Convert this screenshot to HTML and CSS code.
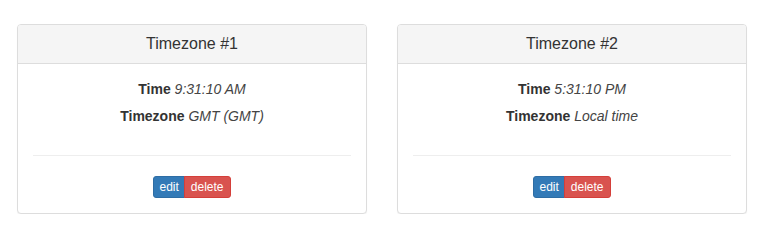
FILE: index.html
```html
<!DOCTYPE html>
<html>
<head>
<meta charset="utf-8">
<link rel="stylesheet" href="styles.css">
</head>
<body>
<div class="row">
  <div class="panel">
    <div class="panel-heading"><h3 class="panel-title">Timezone #1</h3></div>
    <div class="panel-body">
      <p class="line"><strong>Time</strong> <em>9:31:10 AM</em></p>
      <p class="line last"><strong>Timezone</strong> <em>GMT (GMT)</em></p>
      <hr class="sep">
      <div class="actions">
        <div class="btn-group">
          <button class="btn btn-primary">edit</button><button class="btn btn-danger">delete</button>
        </div>
      </div>
    </div>
  </div>
  <div class="panel">
    <div class="panel-heading"><h3 class="panel-title">Timezone #2</h3></div>
    <div class="panel-body">
      <p class="line"><strong>Time</strong> <em>5:31:10 PM</em></p>
      <p class="line last"><strong>Timezone</strong> <em>Local time</em></p>
      <hr class="sep">
      <div class="actions">
        <div class="btn-group">
          <button class="btn btn-primary">edit</button><button class="btn btn-danger">delete</button>
        </div>
      </div>
    </div>
  </div>
</div>
</body>
</html>
```
FILE: styles.css
```css
html, body {
  margin: 0;
  padding: 0;
  background: #fff;
}
body {
  font-family: "Liberation Sans", Arial, Helvetica, sans-serif;
  font-size: 14px;
  line-height: 20px;
  color: #333;
}
.row {
  display: flex;
  gap: 30px;
  padding: 24px 0 0 17px;
}
.panel {
  width: 350px;
  box-sizing: border-box;
  border: 1px solid #ddd;
  border-radius: 4px;
  background: #fff;
  box-shadow: 0 1px 1px rgba(0,0,0,.05);
}
.panel-heading {
  background: #f5f5f5;
  border-bottom: 1px solid #ddd;
  border-radius: 3px 3px 0 0;
  padding: 10px 15px;
  text-align: center;
}
.panel-title {
  margin: 0;
  font-size: 16px;
  font-weight: normal;
  line-height: 17.6px;
  color: #333;
}
.panel-body {
  padding: 15px;
  text-align: center;
}
.line {
  margin: 0 0 7px;
}
.line.last {
  margin-bottom: 0;
}
.line em {
  color: #444;
}
.sep {
  margin: 29px 0 20px;
  border: 0;
  border-top: 1px solid #eee;
}
.actions {
  display: flex;
  justify-content: center;
}
.btn-group {
  display: flex;
}
.btn {
  font-family: inherit;
  font-size: 12px;
  line-height: 18px;
  padding: 1px 5px;
  color: #fff;
  border: 1px solid transparent;
  margin: 0;
  cursor: pointer;
}
.btn-primary {
  background: #337ab7;
  border-color: #2e6da4;
  border-radius: 3px 0 0 3px;
}
.btn-danger {
  background: #d9534f;
  border-color: #d43f3a;
  border-radius: 0 3px 3px 0;
  margin-left: -1px;
  padding: 1px 6px;
}
```
